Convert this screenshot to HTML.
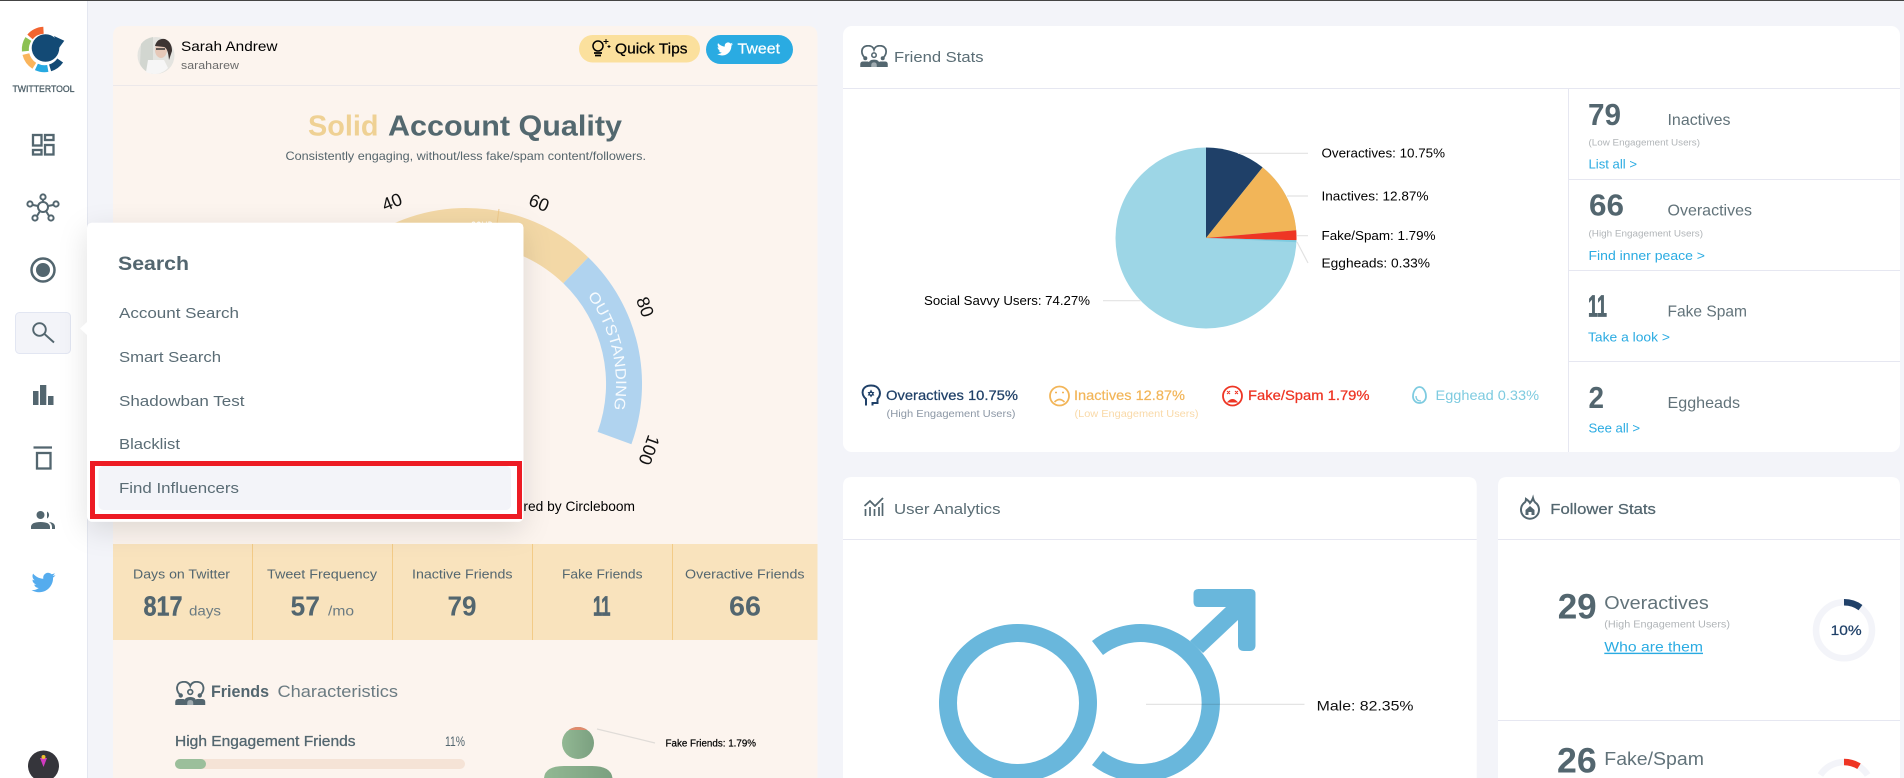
<!DOCTYPE html>
<html lang="en"><head><meta charset="utf-8"><title>Twitter Tool</title>
<style>
html,body{margin:0;padding:0;background:#f3f4f9;width:1904px;height:778px;overflow:hidden}
svg{display:block;font-family:"Liberation Sans",sans-serif;overflow:hidden}
.g{fill:#53666f}.b{font-weight:bold}
.i{fill:none;stroke:#53666f;stroke-width:2.300}
.lb{fill:#000;font-size:13px}
.l{stroke:#e2e2e2;stroke-width:1.200;fill:none}
.a{fill:#2aabe2;font-size:13px}
.s{fill:#b1b5b8;font-size:9px}
</style></head><body>
<svg width="1904" height="778" viewBox="0 0 1904 778" xmlns="http://www.w3.org/2000/svg">
<defs>
<filter id="sh" x="-20%" y="-20%" width="140%" height="150%"><feDropShadow dx="0" dy="8" stdDeviation="14" flood-color="#000" flood-opacity=".12"/></filter>
<linearGradient id="gr" x1="0" x2="1" y1="0" y2="0"><stop offset="0" stop-color="#92b893"/><stop offset="1" stop-color="#7ba080"/></linearGradient>
<symbol id="tw" viewBox="0 0 24 24"><path d="M23.953 4.57a10 10 0 01-2.825.775 4.958 4.958 0 002.163-2.723c-.951.555-2.005.959-3.127 1.184a4.92 4.92 0 00-8.384 4.482C7.69 8.095 4.067 6.13 1.64 3.162a4.822 4.822 0 00-.666 2.475c0 1.71.87 3.213 2.188 4.096a4.904 4.904 0 01-2.228-.616v.06a4.923 4.923 0 003.946 4.827 4.996 4.996 0 01-2.212.085 4.936 4.936 0 004.604 3.417 9.867 9.867 0 01-6.102 2.105c-.39 0-.779-.023-1.17-.067a13.995 13.995 0 007.557 2.209c9.053 0 13.998-7.496 13.998-13.985 0-.21 0-.42-.015-.63A9.935 9.935 0 0024 4.59z"/></symbol>
<symbol id="fr" viewBox="0 0 30 24"><path d="M5 14C0 9 1 2 7 1c4-.7 7 1 8 4 1-3 4-4.700 8-4 6 1 7 8 2 13" fill="none" stroke="#53666f" stroke-width="1.900"/><circle cx="15" cy="11" r="2.400" fill="none" stroke="#53666f" stroke-width="1.700"/><circle cx="5.500" cy="14.500" r="2.200" fill="#53666f"/><circle cx="24.500" cy="14.500" r="2.200" fill="#53666f"/><path d="M0 24v-3q0-3 3-3h5q2 0 2 2v4zM30 24v-3q0-3-3-3h-5q-2 0-2 2v4z" fill="#53666f"/><path d="M9 24v-3q0-5 6-5t6 5v3z" fill="#53666f"/><path d="M12 24v-2q0-3 3-3t3 3v2z" fill="#fff" opacity=".45"/></symbol>
</defs>

<!-- page frame -->
<rect width="1904" height="778" fill="#f3f4f9"/>
<rect width="1904" height="1" fill="#444"/>

<!-- sidebar -->
<rect x="0" y="1" width="87" height="777" fill="#fff"/>
<rect x="87" y="1" width="1" height="777" fill="#e4e7f0"/>
<g fill="none" stroke-width="7">
<path d="M60.200 60.500A19.200 19.200 0 0 1 50.100 67.900" stroke="#134a75"/>
<path d="M47.800 68.400A19.200 19.200 0 0 1 36.400 66.900" stroke="#27a9e1"/>
<path d="M34.300 65.800A19.200 19.200 0 0 1 25.900 54.100" stroke="#f9b45c"/>
<path d="M25.400 51.200A19.200 19.200 0 0 1 28.400 39" stroke="#8cc152"/>
<path d="M30 36.900A19.200 19.200 0 0 1 43.500 30.300" stroke="#f26430"/>
</g>
<circle cx="45.500" cy="48" r="13.800" fill="#134a75"/><path d="M54 36L64.300 40.700L59 48z" fill="#134a75"/>
<text x="12.500" y="92" font-size="9.500" fill="#4d5f68" style="stroke:#4d5f68;stroke-width:.3" textLength="62" lengthAdjust="spacingAndGlyphs">TWITTERTOOL</text>

<g class="i">
<rect x="33" y="135" width="8.500" height="10.500"/><rect x="45" y="135" width="8.500" height="5"/><rect x="33" y="150" width="8.500" height="4.500"/><rect x="45" y="145" width="8.500" height="9.500"/>
</g>
<g class="i" style="stroke-width:2">
<circle cx="43" cy="207" r="5"/><circle cx="43" cy="197" r="2.600"/><circle cx="30" cy="204" r="2.600"/><circle cx="56" cy="204" r="2.600"/><circle cx="35" cy="218" r="2.600"/><circle cx="51" cy="218" r="2.600"/>
<path d="M43 200v2M33 205l5 1M53 205l-5 1M37 216l3-5M49 216l-3-5"/>
<circle cx="43" cy="270" r="11.500" stroke-width="2.500"/>
</g>
<circle cx="43" cy="270" r="7" fill="#53666f"/>
<rect x="15.500" y="312.500" width="55" height="41" rx="4" fill="#f3f4f9" stroke="#e2e6f2"/>
<g class="i" style="stroke-width:1.900"><circle cx="39.500" cy="329.500" r="6.300"/><path d="M44.500 334L54 342.500"/></g>
<path d="M33 391h5.500v14H33zM40 385h6.300v20H40zM48 396h5.500v9H48z" fill="#53666f"/>
<g class="i"><path d="M33.500 447.500H52"/><rect x="37" y="453" width="13.500" height="15.500"/></g>
<g fill="#53666f"><circle cx="40.500" cy="515" r="4"/><path d="M31 529v-2q0-5 9.500-5t9.500 5v2z"/><path d="M47 511.500a4 4 0 0 1 0 7zM49 522q6 .5 6 5v2h-3v-2q0-3-3-5z"/></g>
<use href="#tw" x="31.500" y="570.500" width="24" height="24" fill="#55acee"/>
<path d="M33.700 778A15.500 15.500 0 1 1 53.300 778Z" fill="#35353b"/><path d="M40 758h7l-3.500 9z" fill="#d03ac0"/><circle cx="43.500" cy="757" r="2" fill="#f0c030"/>

<!-- left card -->
<path d="M113 778V36Q113 26 123 26H807.500Q817.500 26 817.500 36V778Z" fill="#fcf4ee"/>
<rect x="113" y="85" width="704.500" height="1" fill="#ece8ea"/>
<circle cx="156" cy="55.500" r="18.500" fill="#e4e4e0"/>
<path d="M141 44a18.500 18.500 0 0 1 12-7v37a18.500 18.500 0 0 1-13-10z" fill="#d2d6d0"/>
<path d="M146 72l2-12h16l4 8a18.500 18.500 0 0 1-22 4z" fill="#f6f6f6"/>
<ellipse cx="161" cy="50" rx="6" ry="8" fill="#e6c8b8"/>
<path d="M155 46q2-8 10-7 7 3 7 12l-3 9q-1-12-5-13z" fill="#3d3432"/>
<path d="M156 49h9" stroke="#333" stroke-width="1.500"/>
<text x="181" y="51" font-size="14" fill="#000" textLength="96.500" lengthAdjust="spacingAndGlyphs">Sarah Andrew</text>
<text x="181" y="69" font-size="11" fill="#6b6b6b" textLength="58" lengthAdjust="spacingAndGlyphs">saraharew</text>
<rect x="579" y="35" width="121" height="27.500" rx="13.700" fill="#fbe09d"/>
<circle cx="598" cy="46" r="5" fill="none" stroke="#000" stroke-width="1.500"/><path d="M594 53h8M595 55.500h6" stroke="#000" stroke-width="1.700"/><path d="M606 39v5M603.500 41.500h5M609 45v3M607.500 46.500h3" stroke="#000"/>
<text x="615" y="53.500" font-size="15" fill="#000" style="stroke:#000;stroke-width:.25" textLength="72.500" lengthAdjust="spacingAndGlyphs">Quick Tips</text>
<rect x="706" y="35" width="87" height="29" rx="14.500" fill="#2aabe2"/>
<use href="#tw" x="717" y="41" width="16" height="16" fill="#fff"/>
<text x="737.500" y="53.500" font-size="15" fill="#fff" style="stroke:#fff;stroke-width:.2" textLength="42.500" lengthAdjust="spacingAndGlyphs">Tweet</text>

<text x="308" y="135.500" font-size="29" class="b" fill="#efd194" textLength="70.500" lengthAdjust="spacingAndGlyphs">Solid</text>
<text x="388" y="135.500" font-size="29" class="b" fill="#53686f" textLength="234" lengthAdjust="spacingAndGlyphs">Account Quality</text>
<text x="285.500" y="160" font-size="12" fill="#55656c" textLength="360.500" lengthAdjust="spacingAndGlyphs">Consistently engaging, without/less fake/spam content/followers.</text>

<!-- gauge -->
<path d="M378 231.600A176 176 0 0 1 588.300 257.400L563.300 283.300A140 140 0 0 0 396 262.800Z" fill="#f3d8a6"/>
<path d="M588.300 257.400A176 176 0 0 1 631.400 444.200L597.600 431.900A140 140 0 0 0 563.300 283.300Z" fill="#b0d3ef"/>
<path d="M499 209l-4 30" stroke="#eec98c" stroke-width="1"/>
<text x="482" y="231" font-size="14" fill="#fff" text-anchor="middle" textLength="22" lengthAdjust="spacingAndGlyphs">SOLID</text>
<path id="o" d="M587.400 295.800A150 150 0 0 1 613.700 410" fill="none"/>
<text font-size="15" fill="#fff" fill-opacity=".9"><textPath href="#o" textLength="120" lengthAdjust="spacingAndGlyphs">OUTSTANDING</textPath></text>
<g font-size="18" fill="#111" text-anchor="middle">
<text x="392" y="208" transform="rotate(-22 392 202)">40</text>
<text x="539" y="209" transform="rotate(22 539 203)">60</text>
<text x="645" y="313" transform="rotate(70 645 307)">80</text>
<text x="649" y="456" transform="rotate(110 649 450)">100</text>
</g>
<text x="489" y="511" font-size="14" fill="#000" textLength="146" lengthAdjust="spacingAndGlyphs">Powered by Circleboom</text>

<!-- stat band -->
<rect x="113" y="544" width="704.500" height="96" fill="#f9e3bd"/>
<path d="M252.500 544v96M392.500 544v96M532.500 544v96M672.500 544v96" stroke="#f3cb87"/>
<g font-size="13" class="g">
<text x="133" y="578.700" textLength="97" lengthAdjust="spacingAndGlyphs">Days on Twitter</text>
<text x="267" y="578.700" textLength="110" lengthAdjust="spacingAndGlyphs">Tweet Frequency</text>
<text x="412" y="578.700" textLength="100.500" lengthAdjust="spacingAndGlyphs">Inactive Friends</text>
<text x="562" y="578.700" textLength="80.500" lengthAdjust="spacingAndGlyphs">Fake Friends</text>
<text x="685" y="578.700" textLength="119.500" lengthAdjust="spacingAndGlyphs">Overactive Friends</text>
</g>
<g font-size="28" class="g b">
<text x="143.500" y="615.700" style="stroke:#53666f;stroke-width:.4" textLength="39" lengthAdjust="spacingAndGlyphs">817</text>
<text x="290.500" y="615.700" textLength="29.500" lengthAdjust="spacingAndGlyphs">57</text>
<text x="447.500" y="615.700" textLength="29" lengthAdjust="spacingAndGlyphs">79</text>
<text x="593" y="615.700" style="stroke:#53666f;stroke-width:.7" textLength="17.500" lengthAdjust="spacingAndGlyphs">11</text>
<text x="729" y="615.700" textLength="32" lengthAdjust="spacingAndGlyphs">66</text>
</g>
<text x="189" y="615.700" font-size="14" fill="#6b7b82" textLength="32" lengthAdjust="spacingAndGlyphs">days</text>
<text x="328" y="615.700" font-size="14" fill="#6b7b82" textLength="26" lengthAdjust="spacingAndGlyphs">/mo</text>

<!-- friends characteristics -->
<use href="#fr" x="175" y="681" width="30.500" height="24"/>
<text x="211" y="697" font-size="17" class="g b" textLength="58" lengthAdjust="spacingAndGlyphs">Friends</text>
<text x="277.500" y="697" font-size="17" fill="#6b7b82" textLength="120.500" lengthAdjust="spacingAndGlyphs">Characteristics</text>
<text x="175" y="746" font-size="15" class="g" style="stroke:#53666f;stroke-width:.3" textLength="180.500" lengthAdjust="spacingAndGlyphs">High Engagement Friends</text>
<text x="445" y="746" font-size="14" class="g" textLength="20" lengthAdjust="spacingAndGlyphs">11%</text>
<rect x="175" y="759" width="290" height="10" rx="5" fill="#f5e3d6"/>
<rect x="175" y="759" width="31" height="10" rx="5" fill="#9bbf9b"/>
<circle cx="578" cy="743" r="16" fill="url(#gr)"/>
<path d="M568.700 730a16 16 0 0 1 18.600 0z" fill="#e08a6c"/>
<path d="M544 778q1-12 20-12h28q19 0 20.500 12z" fill="url(#gr)"/>
<path d="M597 729l58 14" stroke="#e0dcd8" stroke-width="1.200"/>
<text x="665.500" y="746.700" font-size="10" fill="#000" style="stroke:#000;stroke-width:.2" textLength="90.500" lengthAdjust="spacingAndGlyphs">Fake Friends: 1.79%</text>

<!-- friend stats card -->
<rect x="843" y="26" width="1057" height="426" rx="9" fill="#fff"/>
<rect x="843" y="88" width="1057" height="1" fill="#e6e7f1"/>
<use href="#fr" x="860" y="45" width="28" height="22"/>
<text x="894" y="62" font-size="15" fill="#5a6d75" textLength="89.500" lengthAdjust="spacingAndGlyphs">Friend Stats</text>
<path d="M1568.500 89V452" stroke="#e6e7f1"/>
<path d="M1569 179.500H1900M1569 270.500H1900M1569 361.500H1900" stroke="#e6e7f1"/>

<!-- pie -->
<circle cx="1206" cy="238" r="90.500" fill="#9dd6e6"/>
<path d="M1206 238V147.500A90.500 90.500 0 0 1 1262.600 167.400Z" fill="#1f4068"/>
<path d="M1206 238L1262.600 167.400A90.500 90.500 0 0 1 1296.200 230.200Z" fill="#f2b558"/>
<path d="M1206 238L1296.200 230.200A90.500 90.500 0 0 1 1296.500 240.300Z" fill="#ee3524"/>
<path d="M1206 238L1296.500 240.300A90.500 90.500 0 0 1 1296.400 242.200Z" fill="#7ecbe0"/>
<path class="l" d="M1238 153.300H1308M1287 196H1308M1297 235.700H1308M1297 242L1308 263M1103 300.700H1141"/>
<text class="lb" x="1321.500" y="157.700" textLength="123.500" lengthAdjust="spacingAndGlyphs">Overactives: 10.75%</text>
<text class="lb" x="1321.500" y="200.700" textLength="107" lengthAdjust="spacingAndGlyphs">Inactives: 12.87%</text>
<text class="lb" x="1321.500" y="240" textLength="114" lengthAdjust="spacingAndGlyphs">Fake/Spam: 1.79%</text>
<text class="lb" x="1321.500" y="267.700" textLength="108.500" lengthAdjust="spacingAndGlyphs">Eggheads: 0.33%</text>
<text class="lb" x="924" y="305" textLength="166" lengthAdjust="spacingAndGlyphs">Social Savvy Users: 74.27%</text>

<!-- legend -->
<path d="M866 405.500V399C860 394 862 385.500 871 385.500C880 385.500 881 393 879 397L877.500 399V403H872.500V405.500" fill="none" stroke="#1f4068" stroke-width="2"/>
<path d="M871 390.500l2.500 4.500h-5zM871 396.500l-2.500-4h5z" fill="none" stroke="#1f4068"/>
<text x="886" y="400" font-size="14" fill="#1f4068" style="stroke:#1f4068;stroke-width:.25" textLength="132" lengthAdjust="spacingAndGlyphs">Overactives 10.75%</text>
<text x="886.500" y="417" font-size="10" fill="#8c97a5" textLength="129" lengthAdjust="spacingAndGlyphs">(High Engagement Users)</text>
<circle cx="1059.500" cy="396" r="9.500" fill="none" stroke="#f2b558" stroke-width="1.800"/>
<path d="M1055 392.500h2M1062 392.500h2M1054.500 402q5-5 10 0" fill="none" stroke="#f2b558" stroke-width="1.600"/>
<text x="1074" y="400" font-size="14" fill="#f2b558" style="stroke:#f2b558;stroke-width:.2" textLength="111" lengthAdjust="spacingAndGlyphs">Inactives 12.87%</text>
<text x="1074.500" y="417" font-size="10" fill="#f9d9a8" textLength="124" lengthAdjust="spacingAndGlyphs">(Low Engagement Users)</text>
<circle cx="1232.500" cy="396" r="9.500" fill="none" stroke="#ee3524" stroke-width="1.800"/>
<path d="M1227 391l3 3m0-3l-3 3M1235 391l3 3m0-3l-3 3" stroke="#ee3524"/>
<path d="M1228 402q4.500-5 9 0z" fill="#ee3524" stroke="#ee3524"/>
<text x="1248" y="400" font-size="14" fill="#ee3524" style="stroke:#ee3524;stroke-width:.25" textLength="121.500" lengthAdjust="spacingAndGlyphs">Fake/Spam 1.79%</text>
<path d="M1419.500 387c4 0 6.500 5 6.500 9.500a6.500 6.500 0 0 1-13 0c0-4.500 2.500-9.500 6.500-9.500z" fill="none" stroke="#7ecbe0" stroke-width="1.800"/>
<path d="M1416 396q0 5 5 5" fill="none" stroke="#7ecbe0" stroke-width="1.300"/>
<text x="1435.500" y="400" font-size="14" fill="#7ecbe0" textLength="103.500" lengthAdjust="spacingAndGlyphs">Egghead 0.33%</text>

<!-- right rows -->
<g font-size="31" class="g b">
<text x="1588" y="125" textLength="33" lengthAdjust="spacingAndGlyphs">79</text>
<text x="1589" y="215.700" textLength="35" lengthAdjust="spacingAndGlyphs">66</text>
<text x="1588" y="316.700" style="stroke:#53666f;stroke-width:.7" textLength="19" lengthAdjust="spacingAndGlyphs">11</text>
<text x="1588.500" y="408" textLength="15.500" lengthAdjust="spacingAndGlyphs">2</text>
</g>
<g font-size="16" fill="#62737a">
<text x="1667.500" y="125" textLength="63" lengthAdjust="spacingAndGlyphs">Inactives</text>
<text x="1667.500" y="215.700" textLength="84.500" lengthAdjust="spacingAndGlyphs">Overactives</text>
<text x="1667.500" y="316.700" textLength="79.500" lengthAdjust="spacingAndGlyphs">Fake Spam</text>
<text x="1667.500" y="408" textLength="72.500" lengthAdjust="spacingAndGlyphs">Eggheads</text>
</g>
<text class="s" x="1588.500" y="145.700" textLength="111.500" lengthAdjust="spacingAndGlyphs">(Low Engagement Users)</text>
<text class="s" x="1588.500" y="236.700" textLength="114.500" lengthAdjust="spacingAndGlyphs">(High Engagement Users)</text>
<text class="a" x="1588.500" y="168.700" textLength="48.500" lengthAdjust="spacingAndGlyphs">List all &gt;</text>
<text class="a" x="1588.500" y="260" textLength="116.500" lengthAdjust="spacingAndGlyphs">Find inner peace &gt;</text>
<text class="a" x="1588" y="341.700" textLength="82" lengthAdjust="spacingAndGlyphs">Take a look &gt;</text>
<text class="a" x="1588.500" y="432.700" textLength="51.500" lengthAdjust="spacingAndGlyphs">See all &gt;</text>

<!-- user analytics -->
<path d="M843 778V486Q843 477 852 477H1467.700Q1476.700 477 1476.700 486V778Z" fill="#fff"/>
<rect x="843" y="539" width="633.700" height="1" fill="#e6e7f1"/>
<path d="M865.500 516v-7M870 516v-9M874.500 516v-7M879 516v-9M882.500 516v-13" stroke="#53666f" stroke-width="1.700" fill="none"/>
<path d="M864.500 506l5.500-5 5 5 8-8" stroke="#53666f" stroke-width="1.800" fill="none"/>
<text x="894" y="514" font-size="15" fill="#5a6d75" textLength="106.500" lengthAdjust="spacingAndGlyphs">User Analytics</text>
<path fill-rule="evenodd" d="M993.200 778A79 79 0 1 1 1042.800 778ZM957 703a61 61 0 1 0 122 0a61 61 0 1 0-122 0Z" fill="#69b7dc"/>
<path d="M1092 641A79 79 0 1 1 1165.800 778L1116.200 778A79 79 0 0 1 1092 765L1103 751A61 61 0 1 0 1103 655Z" fill="#69b7dc"/>
<path d="M1190 641L1226 607L1238 607L1238 620L1203 653Z" fill="#69b7dc"/>
<path d="M1198.500 589H1250.500Q1255.500 589 1255.500 594V645Q1255.500 651 1249.500 651H1244Q1238 651 1238 645V607H1198.500Q1193.500 607 1193.500 602V594Q1193.500 589 1198.500 589Z" fill="#69b7dc"/>
<path d="M1146 704.300H1304.500" stroke="#000" stroke-opacity=".12" stroke-width="1.200"/>
<text x="1316.700" y="710.700" font-size="14" fill="#111" textLength="96.800" lengthAdjust="spacingAndGlyphs">Male: 82.35%</text>

<!-- follower stats -->
<path d="M1498 778V486Q1498 477 1507 477H1891Q1900 477 1900 486V778Z" fill="#fff"/>
<rect x="1498" y="539" width="402" height="1" fill="#e6e7f1"/>
<path d="M1526 499q3 2 4 4 2-2 3-5 1 4 3.500 5.500A9 9 0 1 1 1524 503q2-1 2-4z" fill="none" stroke="#53666f" stroke-width="2"/>
<path d="M1525.500 510l4.500-4 4.500 4v5h-3v-3h-3v3h-3z" fill="#53666f"/>
<text x="1550.300" y="514" font-size="15" class="g" style="stroke:#53666f;stroke-width:.25" textLength="105.500" lengthAdjust="spacingAndGlyphs">Follower Stats</text>
<text x="1557.700" y="618.300" font-size="35" class="g b" textLength="39" lengthAdjust="spacingAndGlyphs">29</text>
<text x="1604.300" y="609" font-size="18" fill="#62737a" textLength="104.500" lengthAdjust="spacingAndGlyphs">Overactives</text>
<text x="1604.300" y="627.300" font-size="10" fill="#b1b5b8" textLength="125.700" lengthAdjust="spacingAndGlyphs">(High Engagement Users)</text>
<text x="1604.300" y="651.700" font-size="14" fill="#2aabe2" text-decoration="underline" textLength="98.700" lengthAdjust="spacingAndGlyphs">Who are them</text>
<circle cx="1844" cy="630.300" r="28" fill="none" stroke="#f3f4f9" stroke-width="6.500"/>
<path d="M1844 602.300A28 28 0 0 1 1860.500 607.600" fill="none" stroke="#1f4068" stroke-width="6.500"/>
<text x="1830.700" y="635" font-size="14" fill="#1f4068" style="stroke:#1f4068;stroke-width:.25" textLength="31" lengthAdjust="spacingAndGlyphs">10%</text>
<rect x="1498" y="720" width="402" height="1" fill="#e6e7f1"/>
<text x="1557" y="772.700" font-size="35" class="g b" textLength="39.700" lengthAdjust="spacingAndGlyphs">26</text>
<text x="1604.300" y="765" font-size="18" fill="#62737a" textLength="99.700" lengthAdjust="spacingAndGlyphs">Fake/Spam</text>
<path d="M1820.400 775A28 28 0 0 1 1867.600 775" fill="none" stroke="#f3f4f9" stroke-width="6.500"/>
<path d="M1844 762A28 28 0 0 1 1859 766.300" fill="none" stroke="#ee3524" stroke-width="6.500"/>

<!-- popover -->
<rect x="87" y="222.700" width="436.500" height="299" rx="5" fill="#fff" filter="url(#sh)"/>
<path d="M87 322L80 328.500L87 335Z" fill="#fff"/>
<text x="118" y="270" font-size="19" class="g b" textLength="71" lengthAdjust="spacingAndGlyphs">Search</text>
<rect x="98.500" y="466" width="412.500" height="44" rx="5" fill="#f3f4f9"/>
<g font-size="15" fill="#5a6c75">
<text x="119" y="318" textLength="120" lengthAdjust="spacingAndGlyphs">Account Search</text>
<text x="119" y="362" textLength="102" lengthAdjust="spacingAndGlyphs">Smart Search</text>
<text x="119" y="406" textLength="125.500" lengthAdjust="spacingAndGlyphs">Shadowban Test</text>
<text x="119" y="449" textLength="61" lengthAdjust="spacingAndGlyphs">Blacklist</text>
<text x="119" y="493" textLength="120" lengthAdjust="spacingAndGlyphs">Find Influencers</text>
</g>
<rect x="92.500" y="463.500" width="427" height="53" fill="none" stroke="#ed1c24" stroke-width="5"/>
</svg>
</body></html>
